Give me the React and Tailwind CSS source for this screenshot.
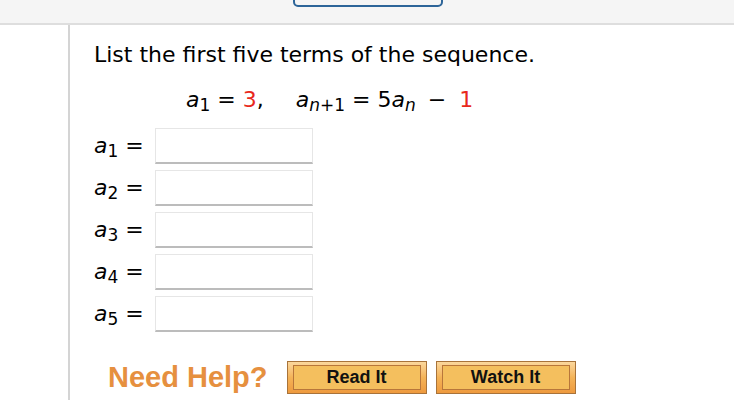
import React from "react"

const TERMS = [1, 2, 3, 4, 5]

function HelpButton({ label }) {
  return (
    <button className="w-[140px] h-[33px] border border-[#a8733a] bg-gradient-to-b from-[#fbd79c] via-[#f4b357] to-[#ee9a3e] p-[3px] px-[5px]">
      <div className="h-full border border-[#b8763a] bg-[#f4bf5e] flex items-center justify-center text-[18px] font-bold text-[#111] [font-family:'Liberation_Sans',Arial,sans-serif]">
        {label}
      </div>
    </button>
  )
}

export default function App() {
  return (
    <div className="w-[734px] h-[400px] bg-white overflow-hidden [font-family:'DejaVu_Sans',Verdana,sans-serif]">
      <div className="h-[25px] bg-[#f5f5f5] border-b-2 border-[#dedede] relative">
        <div className="absolute left-[293px] top-[-10px] w-[150px] h-[17px] border-2 border-[#2d6599] rounded-[5px] bg-[#f5f5f5]" />
      </div>
      <div className="flex h-[375px]">
        <div className="w-[70px] border-r-2 border-[#d4d4d4]" />
        <div className="pl-[24px] pt-[16px]">
          <p className="text-[22px] text-black leading-[28px] whitespace-nowrap">List the first five terms of the sequence.</p>
          <p className="mt-[17px] ml-[92px] text-[22px] text-black leading-[28px] whitespace-nowrap">
            <i>a</i><sub className="text-[17px]">1</sub> = <span className="text-[#e8281c]">3</span>,
            <span className="ml-[32px]"><i>a</i><sub className="text-[17px]"><i>n</i>+1</sub> = 5<i>a</i><sub className="text-[17px]"><i>n</i></sub><span className="ml-[12px]">−</span> <span className="text-[#e8281c] ml-[6px]">1</span></span>
          </p>
          <div className="mt-[14px] flex flex-col gap-[6px]">
            {TERMS.map((n) => (
              <div key={n} className="flex items-center h-[36px]">
                <span className="w-[61px] text-[22px] leading-[28px] text-black whitespace-nowrap">
                  <i>a</i><sub className="text-[17px]">{n}</sub> =
                </span>
                <div className="w-[158px] h-[36px] border border-[#e6e6e6] border-b-2 border-b-[#bcbcbc] bg-white" />
              </div>
            ))}
          </div>
          <div className="mt-[29px] ml-[14px] flex items-center">
            <span className="text-[29px] leading-[33px] font-bold text-[#e6903f] [font-family:'Liberation_Sans',Arial,sans-serif] mr-[19px] whitespace-nowrap">Need Help?</span>
            <div className="flex gap-[9px]">
              <HelpButton label="Read It" />
              <HelpButton label="Watch It" />
            </div>
          </div>
        </div>
      </div>
    </div>
  )
}
